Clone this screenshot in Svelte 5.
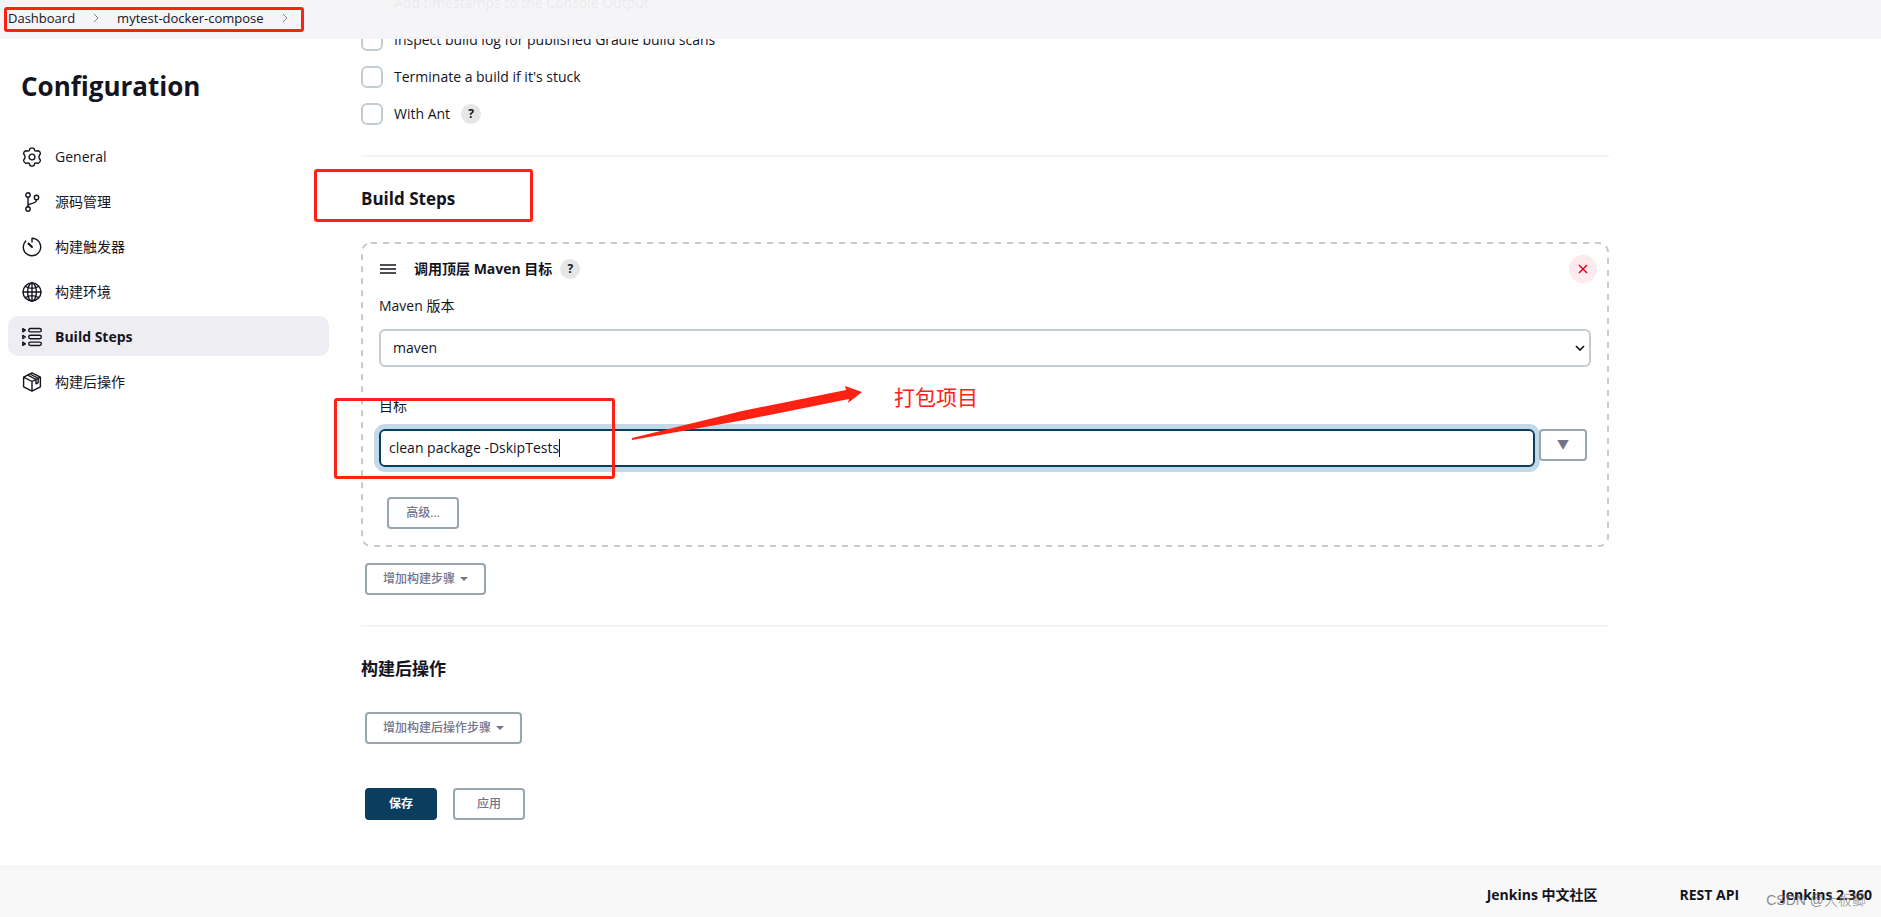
<script>
	let menus = [
		{ icon: 'gear', name: 'General' },
		{ icon: 'branch', name: '源码管理' },
		{ icon: 'timer', name: '构建触发器' },
		{ icon: 'globe', name: '构建环境' },
		{ icon: 'steps', name: 'Build Steps' },
		{ icon: 'box', name: '构建后操作' }
	];
	let active = 'Build Steps';

	let options = [
		{ name: 'Add timestamps to the Console Output', checked: false },
		{ name: 'Inspect build log for published Gradle build scans', checked: false },
		{ name: "Terminate a build if it's stuck", checked: false },
		{ name: 'With Ant', checked: false, help: true }
	];

	let version = 'maven';
	let targets = 'clean package -DskipTests';
</script>

<header>
	<nav class="breadcrumb">
		<a href="#dashboard">Dashboard</a>
		<svg viewBox="0 0 8 12"><path d="M2 2l4 4-4 4" /></svg>
		<a href="#job">mytest-docker-compose</a>
		<svg viewBox="0 0 8 12"><path d="M2 2l4 4-4 4" /></svg>
	</nav>
</header>

<div class="page">
	<aside>
		<h1>Configuration</h1>
		<nav class="menu">
			{#each menus as menu}
				<a href="#{menu.icon}" class:active={active === menu.name} on:click={() => (active = menu.name)}>
					<svg viewBox="0 0 20 20">
						{#if menu.icon === 'gear'}
							<circle cx="10" cy="10" r="2.9" />
							<path d="M8 1.600Q10 .2 12 1.600L12.600 3.300Q13.200 4.300 14.600 4L16.300 3.700Q18.500 4.600 18.400 6.900L17.300 8.500Q16.600 10 17.300 11.500L18.400 13.100Q18.500 15.400 16.300 16.300L14.600 16Q13.200 15.700 12.600 16.700L12 18.400Q10 19.800 8 18.400L7.400 16.700Q6.800 15.700 5.400 16L3.700 16.300Q1.500 15.400 1.600 13.100L2.700 11.500Q3.400 10 2.700 8.500L1.600 6.900Q1.500 4.600 3.700 3.700L5.400 4Q6.800 4.300 7.400 3.300z" />
						{:else if menu.icon === 'branch'}
							<circle cx="6" cy="3" r="2.200" />
							<circle cx="6" cy="17" r="2.200" />
							<circle cx="14.500" cy="5.500" r="2.200" />
							<path d="M6 5.200v9.600M14.500 7.700c0 5-8.500 3-8.500 6" />
						{:else if menu.icon === 'timer'}
							<path d="M10 5V1.300a8.700 8.700 0 1 1-6.300 2.700" />
							<path d="M6.500 6.500l3.500 3.500" class="thick" />
						{:else if menu.icon === 'globe'}
							<circle cx="10" cy="10" r="9" />
							<ellipse cx="10" cy="10" rx="4.400" ry="9" />
							<path d="M10 1v18M1 10h18M3.500 4.500c4 2.300 9 2.300 13 0M3.500 15.500c4-2.300 9-2.300 13 0" />
						{:else if menu.icon === 'steps'}
							<rect x="6.700" y="1.500" width="12.600" height="3.400" rx="1.700" />
							<rect x="6.700" y="8.300" width="12.600" height="3.400" rx="1.700" />
							<rect x="6.700" y="15.100" width="12.600" height="3.400" rx="1.700" />
							<path d="M.8 1.600v3.200l2.500-1.600zM.8 8.400v3.200l2.500-1.600zM.8 15.200v3.200l2.500-1.600z" />
						{:else}
							<path d="M10 .9l8.400 4.300v9.600L10 19.100l-8.400-4.300V5.200zM1.600 5.200L10 9.500l8.400-4.300M10 9.500v9.600M5.800 3.100l8.200 4.400v4.300l2.200-1.100V6.300L8 2" />
						{/if}
					</svg>
					<span>{menu.name}</span>
				</a>
			{/each}
		</nav>
	</aside>

	<form on:submit|preventDefault>
		<div class="options">
			{#each options as option}
				<div class="option">
					<label>
						<input type="checkbox" bind:checked={option.checked} />
						{option.name}
					</label>
					{#if option.help}
						<button type="button" class="help" aria-label="Help">?</button>
					{/if}
				</div>
			{/each}
		</div>

		<section>
			<h2>Build Steps</h2>
			<div class="step">
				<svg class="outline"><rect x="1" y="1" rx="9" /></svg>
				<div class="step-head">
					<svg class="handle" viewBox="0 0 16 10"><path d="M0 1h16M0 5h16M0 9h16" /></svg>
					<strong>调用顶层 Maven 目标</strong>
					<button type="button" class="help" aria-label="Help">?</button>
					<button type="button" class="delete" aria-label="Delete">
						<svg viewBox="0 0 10 10"><path d="M1 1l8 8M9 1l-8 8" /></svg>
					</button>
				</div>

				<label class="field-label" for="version">Maven 版本</label>
				<div class="select-wrap">
					<select id="version" bind:value={version}>
						<option value="maven">maven</option>
					</select>
					<svg viewBox="0 0 10 6"><path d="M1 1l4 4 4-4" /></svg>
				</div>

				<label class="field-label" for="targets">目标</label>
				<div class="target-row">
					<div class="target-box">
						<input id="targets" type="text" bind:value={targets} size="24" />
						<span class="caret"></span>
					</div>
					<button type="button" class="btn expand">▼</button>
				</div>

				<button type="button" class="btn advanced">高级...</button>
			</div>
			<button type="button" class="btn add">增加构建步骤<i></i></button>
		</section>

		<section class="post">
			<h2>构建后操作</h2>
			<button type="button" class="btn add">增加构建后操作步骤<i></i></button>
		</section>

		<div class="actions">
			<button type="submit" class="btn primary">保存</button>
			<button type="button" class="btn">应用</button>
		</div>
	</form>
</div>

<footer>
	<a href="#community">Jenkins 中文社区</a>
	<a href="#api">REST API</a>
	<a href="#version">Jenkins 2.360</a>
</footer>

<!-- notes drawn over the page -->
<div class="mark mark-crumb"></div>
<div class="mark mark-title"></div>
<div class="mark mark-target"></div>
<svg class="arrow" viewBox="0 0 232 56">
	<path d="M0 52L110 25 214 4l-1-4 17 6-14 11 1-4L112 34 0 54z" />
</svg>
<span class="note">打包项目</span>
<span class="watermark">CSDN @大板鲫</span>

<style>
	:global(body) {
		background: #fff;
		color: #14141f;
		font-family: 'Open Sans', 'Noto Sans CJK SC', sans-serif;
		font-size: 14px;
		line-height: 20px;
	}

	:global(#app) {
		position: relative;
		display: flex;
		flex-direction: column;
		min-height: 100vh;
		overflow: hidden;
	}

	* {
		box-sizing: border-box;
	}

	a {
		color: inherit;
		text-decoration: none;
	}

	button,
	input,
	select {
		font: inherit;
		color: inherit;
		margin: 0;
	}

	svg {
		flex: none;
		fill: none;
		stroke: currentColor;
	}

	header {
		position: absolute;
		z-index: 1;
		top: 0;
		left: 0;
		right: 0;
		height: 39px;
		background: rgba(244, 244, 247, 0.95);
	}

	.breadcrumb {
		display: flex;
		align-items: center;
		gap: 17px;
		height: 36px;
		padding-left: 8px;
		font-size: 13px;
	}

	.breadcrumb svg {
		width: 8px;
		height: 12px;
		stroke: #83838c;
	}

	.page {
		display: flex;
		flex: 1;
	}

	aside {
		width: 337px;
		flex: none;
		padding: 67px 8px 0;
	}

	h1 {
		margin: 0 0 31px 13px;
		font-size: 26px;
		line-height: 38px;
	}

	.menu {
		display: flex;
		flex-direction: column;
		gap: 5px;
	}

	.menu a {
		display: flex;
		align-items: center;
		gap: 13px;
		height: 40px;
		padding: 1px 14px 0;
		border-radius: 10px;
	}

	.menu a.active {
		background: #eeedf2;
		font-weight: 700;
	}

	.menu svg {
		width: 20px;
		height: 20px;
		stroke-width: 1.4;
		stroke-linejoin: round;
		stroke-linecap: round;
	}

	.thick {
		stroke-width: 2;
	}

	form {
		flex: 1;
		min-width: 0;
		max-width: 1272px;
		margin-top: -8px;
		padding-left: 24px;
	}

	.options {
		display: flex;
		flex-direction: column;
		gap: 15px;
	}

	.option,
	.option label {
		display: flex;
		align-items: center;
		gap: 11px;
		height: 22px;
	}

	.option input {
		appearance: none;
		width: 22px;
		height: 22px;
		border: 2px solid #c3cdd1;
		border-radius: 6px;
		background: #fff;
	}

	.help {
		width: 20px;
		height: 20px;
		padding: 0;
		border: none;
		border-radius: 50%;
		background: #e6e6e6;
		font-size: 12px;
		font-weight: 700;
	}

	section {
		margin-top: 30px;
		padding-top: 28px;
		border-top: 2px solid #f3f3f8;
	}

	h2 {
		margin: 0 0 29px;
		font-size: 17px;
		line-height: 28px;
	}

	.step {
		position: relative;
		padding: 11px 18px 18px;
	}

	/* longer dashes than a dashed border gives */
	.outline {
		position: absolute;
		inset: 0;
		width: 100%;
		height: 100%;
		stroke: #c3cdd1;
		stroke-width: 2;
		stroke-dasharray: 6 6;
		pointer-events: none;
	}

	.outline rect {
		width: calc(100% - 2px);
		height: calc(100% - 2px);
	}

	.step-head {
		display: flex;
		align-items: center;
		gap: 8px;
		height: 32px;
	}

	.handle {
		width: 16px;
		height: 10px;
		margin: 0 10px 0 1px;
		stroke-width: 1.5;
	}

	.delete {
		display: grid;
		place-items: center;
		width: 28px;
		height: 28px;
		margin-left: auto;
		margin-right: -6px;
		padding: 0;
		border: none;
		border-radius: 50%;
		background: #fdeaec;
		color: #e6001f;
	}

	.delete svg {
		width: 10px;
		height: 10px;
		stroke-width: 1.5;
	}

	.field-label {
		display: block;
		margin: 11px 0 13px;
	}

	.select-wrap {
		display: grid;
		align-items: center;
		margin-bottom: 29px;
	}

	.select-wrap > * {
		grid-area: 1 / 1;
	}

	select {
		appearance: none;
		width: 100%;
		height: 38px;
		padding: 0 12px;
		border: 2px solid #c3cdd1;
		border-radius: 6px;
		background: #fff;
	}

	.select-wrap svg {
		justify-self: end;
		width: 10px;
		height: 6px;
		margin-right: 6px;
		stroke-width: 1.7;
		pointer-events: none;
	}

	.target-row {
		display: flex;
		align-items: flex-start;
		gap: 4px;
		padding-right: 4px;
	}

	.target-box {
		display: flex;
		flex: 1;
		align-items: center;
		height: 38px;
		padding: 0 8px;
		border: 2px solid #0b3d5f;
		border-radius: 6px;
		box-shadow: 0 0 0 5px #c2dae8;
	}

	.target-box input {
		field-sizing: content;
		padding: 0;
		border: none;
		outline: none;
		background: none;
	}

	.caret {
		width: 1px;
		height: 18px;
		background: #14141f;
	}

	.btn {
		min-width: 72px;
		height: 32px;
		padding: 0 16px;
		border: 2px solid #98a6af;
		border-radius: 4px;
		background: #fff;
		color: #73738c;
		font-size: 12px;
		font-weight: 500;
	}

	.expand {
		min-width: 48px;
		padding: 0;
	}

	.advanced {
		display: block;
		margin: 30px 0 0 8px;
	}

	.add {
		display: flex;
		align-items: center;
		gap: 5px;
		margin: 16px 0 0 4px;
	}

	.add i {
		border: 4px solid transparent;
		border-top-color: currentColor;
		border-bottom: none;
	}

	.actions {
		display: flex;
		gap: 16px;
		margin: 44px 0 46px 4px;
	}

	.primary {
		border-color: #0b3d5f;
		background: #0b3d5f;
		color: #fff;
		font-weight: 700;
	}

	footer {
		display: flex;
		justify-content: flex-end;
		gap: 82px;
		height: 51px;
		padding: 18px 9px 0 0;
		border-top: 1px solid #f0f0f5;
		background: #f8f8f8;
		font-weight: 700;
	}

	footer a:last-child {
		margin-left: -40px;
	}

	.mark {
		position: absolute;
		z-index: 2;
		border: 3px solid #ff2113;
		border-radius: 3px;
		pointer-events: none;
	}

	.mark-crumb {
		left: 4px;
		top: 7px;
		width: 300px;
		height: 25px;
	}

	.mark-title {
		left: 314px;
		top: 169px;
		width: 219px;
		height: 53px;
	}

	.mark-target {
		left: 334px;
		top: 398px;
		width: 281px;
		height: 81px;
	}

	.arrow {
		position: absolute;
		left: 632px;
		top: 386px;
		width: 232px;
		height: 56px;
		fill: #ff2113;
		stroke: none;
		pointer-events: none;
	}

	.note {
		position: absolute;
		left: 894px;
		top: 383px;
		color: #ff2113;
		font-size: 21px;
		line-height: 28px;
	}

	.watermark {
		position: absolute;
		right: 15px;
		bottom: 7px;
		color: rgba(110, 110, 110, 0.8);
		font-family: 'Liberation Sans', 'Noto Sans CJK SC', sans-serif;
		font-size: 14px;
		font-weight: 300;
	}
</style>
